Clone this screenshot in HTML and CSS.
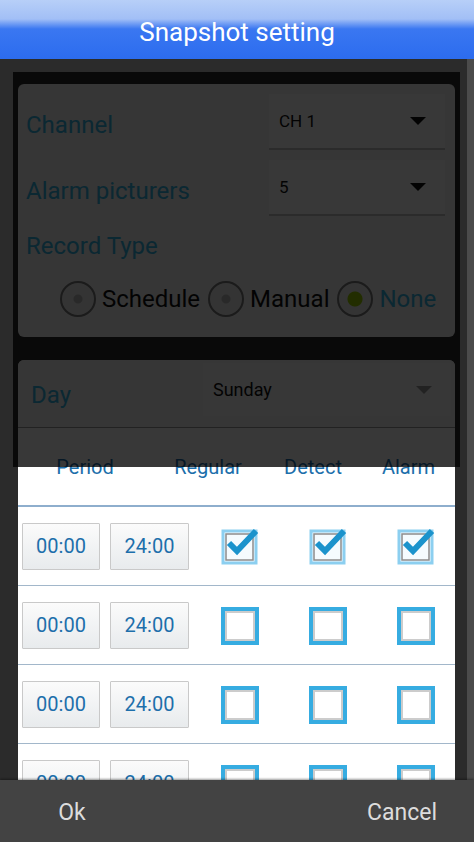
FILE: index.html
```html
<!DOCTYPE html>
<html lang="en">
<head>
  <meta charset="utf-8">
  <meta name="viewport" content="width=device-width,initial-scale=1,user-scalable=no" />
  <title>Snapshot setting</title>
  <link rel="stylesheet" href="styles.css">
</head>

<body>
<div class="app">
  <header class="titlebar">Snapshot setting</header>

  <main class="scroll">
    <div class="panel">

      <section class="card settings">
        <div class="field">
          <span class="label">Channel</span>
          <div class="spinner"><span>CH 1</span><i class="caret"></i></div>
        </div>
        <div class="field">
          <span class="label">Alarm picturers</span>
          <div class="spinner"><span>5</span><i class="caret"></i></div>
        </div>
        <div class="label record-type">Record Type</div>
        <div class="radios">
          <label class="radio"><span class="dot"></span>Schedule</label>
          <label class="radio"><span class="dot"></span>Manual</label>
          <label class="radio checked"><span class="dot"></span>None</label>
        </div>
      </section>

      <section class="card schedule">
        <div class="day-row">
          <span class="label">Day</span>
          <div class="spinner wide"><span>Sunday</span><i class="caret"></i></div>
        </div>
        <div class="cols">
          <span>Period</span>
          <span>Regular</span>
          <span>Detect</span>
          <span>Alarm</span>
        </div>

        <div class="slot">
          <button class="time">00:00</button>
          <button class="time">24:00</button>
          <div class="tick"><svg class="box" viewBox="0 0 38 38"><rect x="2" y="3" width="33" height="32" fill="#f5fbfe" stroke="#8ccff0" stroke-width="3"/><rect x="5" y="6" width="27" height="26" fill="none" stroke="#8c8c8c" stroke-width="1.5"/><path d="M8 15 L16 23 L35 3" fill="none" stroke="#1b93cc" stroke-width="6"/></svg></div>
          <div class="tick"><svg class="box" viewBox="0 0 38 38"><rect x="2" y="3" width="33" height="32" fill="#f5fbfe" stroke="#8ccff0" stroke-width="3"/><rect x="5" y="6" width="27" height="26" fill="none" stroke="#8c8c8c" stroke-width="1.5"/><path d="M8 15 L16 23 L35 3" fill="none" stroke="#1b93cc" stroke-width="6"/></svg></div>
          <div class="tick"><svg class="box" viewBox="0 0 38 38"><rect x="2" y="3" width="33" height="32" fill="#f5fbfe" stroke="#8ccff0" stroke-width="3"/><rect x="5" y="6" width="27" height="26" fill="none" stroke="#8c8c8c" stroke-width="1.5"/><path d="M8 15 L16 23 L35 3" fill="none" stroke="#1b93cc" stroke-width="6"/></svg></div>
        </div>

        <div class="slot">
          <button class="time">00:00</button>
          <button class="time">24:00</button>
          <div class="tick"><svg class="box" viewBox="0 0 38 38"><rect x="2" y="2" width="34" height="34" fill="#fff" stroke="#36ace1" stroke-width="4"/><rect x="5" y="5" width="28" height="28" fill="none" stroke="#cccccc" stroke-width="2"/></svg></div>
          <div class="tick"><svg class="box" viewBox="0 0 38 38"><rect x="2" y="2" width="34" height="34" fill="#fff" stroke="#36ace1" stroke-width="4"/><rect x="5" y="5" width="28" height="28" fill="none" stroke="#cccccc" stroke-width="2"/></svg></div>
          <div class="tick"><svg class="box" viewBox="0 0 38 38"><rect x="2" y="2" width="34" height="34" fill="#fff" stroke="#36ace1" stroke-width="4"/><rect x="5" y="5" width="28" height="28" fill="none" stroke="#cccccc" stroke-width="2"/></svg></div>
        </div>

        <div class="slot">
          <button class="time">00:00</button>
          <button class="time">24:00</button>
          <div class="tick"><svg class="box" viewBox="0 0 38 38"><rect x="2" y="2" width="34" height="34" fill="#fff" stroke="#36ace1" stroke-width="4"/><rect x="5" y="5" width="28" height="28" fill="none" stroke="#cccccc" stroke-width="2"/></svg></div>
          <div class="tick"><svg class="box" viewBox="0 0 38 38"><rect x="2" y="2" width="34" height="34" fill="#fff" stroke="#36ace1" stroke-width="4"/><rect x="5" y="5" width="28" height="28" fill="none" stroke="#cccccc" stroke-width="2"/></svg></div>
          <div class="tick"><svg class="box" viewBox="0 0 38 38"><rect x="2" y="2" width="34" height="34" fill="#fff" stroke="#36ace1" stroke-width="4"/><rect x="5" y="5" width="28" height="28" fill="none" stroke="#cccccc" stroke-width="2"/></svg></div>
        </div>

        <div class="slot">
          <button class="time">00:00</button>
          <button class="time">24:00</button>
          <div class="tick"><svg class="box" viewBox="0 0 38 38"><rect x="2" y="2" width="34" height="34" fill="#fff" stroke="#36ace1" stroke-width="4"/><rect x="5" y="5" width="28" height="28" fill="none" stroke="#cccccc" stroke-width="2"/></svg></div>
          <div class="tick"><svg class="box" viewBox="0 0 38 38"><rect x="2" y="2" width="34" height="34" fill="#fff" stroke="#36ace1" stroke-width="4"/><rect x="5" y="5" width="28" height="28" fill="none" stroke="#cccccc" stroke-width="2"/></svg></div>
          <div class="tick"><svg class="box" viewBox="0 0 38 38"><rect x="2" y="2" width="34" height="34" fill="#fff" stroke="#36ace1" stroke-width="4"/><rect x="5" y="5" width="28" height="28" fill="none" stroke="#cccccc" stroke-width="2"/></svg></div>
        </div>
      </section>

    </div>

    <!-- shade over the part of the form that is not being edited -->
    <div class="dim"></div>
    <div class="scrollbar"></div>
  </main>

  <footer class="actions">
    <button>Ok</button>
    <button>Cancel</button>
  </footer>
</div>
</body>
</html>
```

FILE: styles.css
```css
html {
  touch-action: manipulation;
  overflow: hidden;
}

body {
  margin: 0;
  font-family: Roboto, "Liberation Sans", sans-serif;
  background: #2b2b2b;
  color: #111;
}

.app {
  display: flex;
  flex-direction: column;
  height: 842px;
}

.titlebar {
  height: 59px;
  flex: none;
  display: flex;
  align-items: center;
  justify-content: center;
  padding-top: 4px;
  box-sizing: border-box;
  color: #fff;
  font-size: 26px;
  background: linear-gradient(#b7cff8 0, #a2bff6 19px, #3a77f1 29px, #2c6cef 100%);
}

.scroll {
  flex: 1;
  position: relative;
  overflow: hidden;
  background: #2b2b2b;
}

.panel {
  margin: 13px 14px 0 13px;
  padding: 12px 5px 0 5px;
}

.card {
  border-radius: 6px;
}

/* top form */
.settings {
  background: #f3f3f3;
  height: 253px;
  box-sizing: border-box;
  padding: 10px 10px 20px 8px;
  margin-bottom: 23px;
}

.label {
  font-size: 24px;
  color: #33b5e5;
  line-height: 1;
}

.field {
  display: flex;
  align-items: center;
  justify-content: space-between;
  height: 54px;
}
.field .label {
  padding-top: 8px;
}
.field + .field {
  margin-top: 12px;
}

.spinner {
  width: 176px;
  height: 54px;
  box-sizing: border-box;
  display: flex;
  align-items: center;
  padding-left: 10px;
  font-size: 17px;
  color: #111;
  background: #fff;
  box-shadow: 0 2px 0 #c4c4c4;
}

.caret {
  margin-left: auto;
  margin-right: 19px;
  border-left: 8px solid transparent;
  border-right: 8px solid transparent;
  border-top: 8px solid #111;
}

.record-type {
  margin-top: 18px;
  height: 28px;
  line-height: 28px;
}

.radios {
  display: flex;
  margin: 21px 0 0 34px;
  height: 36px;
  gap: 8px;
}

.radio {
  display: flex;
  align-items: center;
  gap: 6px;
  font-size: 24px;
  color: #111;
}
.radio.checked {
  color: #33b5e5;
}

.dot {
  width: 36px;
  height: 36px;
  box-sizing: border-box;
  border-radius: 50%;
  border: 2px solid #7a7a7a;
  background: radial-gradient(circle, #bcbcbc 0 4px, #ececec 5px);
}
.checked .dot {
  background: radial-gradient(circle, #99cc00 0 7px, #ececec 8px);
}

/* schedule card */
.schedule {
  background: #fff;
  border-radius: 6px 6px 0 0;
}

.day-row {
  display: flex;
  height: 67px;
  padding: 0 4px 0 13px;
  background: #f3f3f3;
  border-radius: 6px 6px 0 0;
  border-bottom: 1px solid #9a9a9a;
}
.day-row .label {
  align-self: center;
  padding-top: 2px;
}
.spinner.wide {
  width: 248px;
  height: 53px;
  margin: 3px 0 0 auto;
  font-size: 18px;
  background: #fafafa;
  box-shadow: none;
}
.spinner.wide .caret {
  border-top-color: #9c9c9c;
}

.cols {
  display: grid;
  grid-template-columns: 134px 112px 98px 1fr;
  align-items: center;
  height: 77px;
  border-bottom: 2px solid #8eaecd;
  font-size: 20px;
  color: #1d6fab;
  text-align: center;
}

.slot {
  display: flex;
  align-items: center;
  height: 78px;
  padding-left: 4px;
  border-bottom: 1px solid #a2b7ca;
}

.time {
  flex: none;
  width: 78px;
  height: 47px;
  padding: 0;
  border: 1px solid #c9c9c9;
  border-radius: 1px;
  background: linear-gradient(#fbfbfb, #e8ebed);
  font-family: inherit;
  font-size: 20px;
  color: #1d6fab;
}
.time + .time {
  width: 79px;
  margin-left: 10px;
}

.tick {
  flex: none;
  width: 88px;
  display: flex;
  justify-content: center;
  padding-top: 2px;
}
.time + .tick {
  margin-left: 7px;
}

.box {
  width: 38px;
  height: 38px;
  overflow: visible;
}

.dim {
  position: absolute;
  top: 13px;
  left: 13px;
  width: 447px;
  height: 395px;
  background: rgba(0, 0, 0, 0.78);
}

.scrollbar {
  position: absolute;
  top: 0;
  bottom: 0;
  right: 0;
  width: 7px;
  background: #4b4b4b;
}

/* dialog buttons */
.actions {
  flex: none;
  height: 62px;
  display: flex;
  justify-content: space-between;
  background: #434343;
  box-shadow: 0 -1px 2px rgba(0, 0, 0, 0.4);
  position: relative;
}

.actions button {
  width: 144px;
  border: 0;
  padding: 2px 0 0;
  background: none;
  font-family: inherit;
  font-size: 23px;
  color: #dcdcdc;
}
```
